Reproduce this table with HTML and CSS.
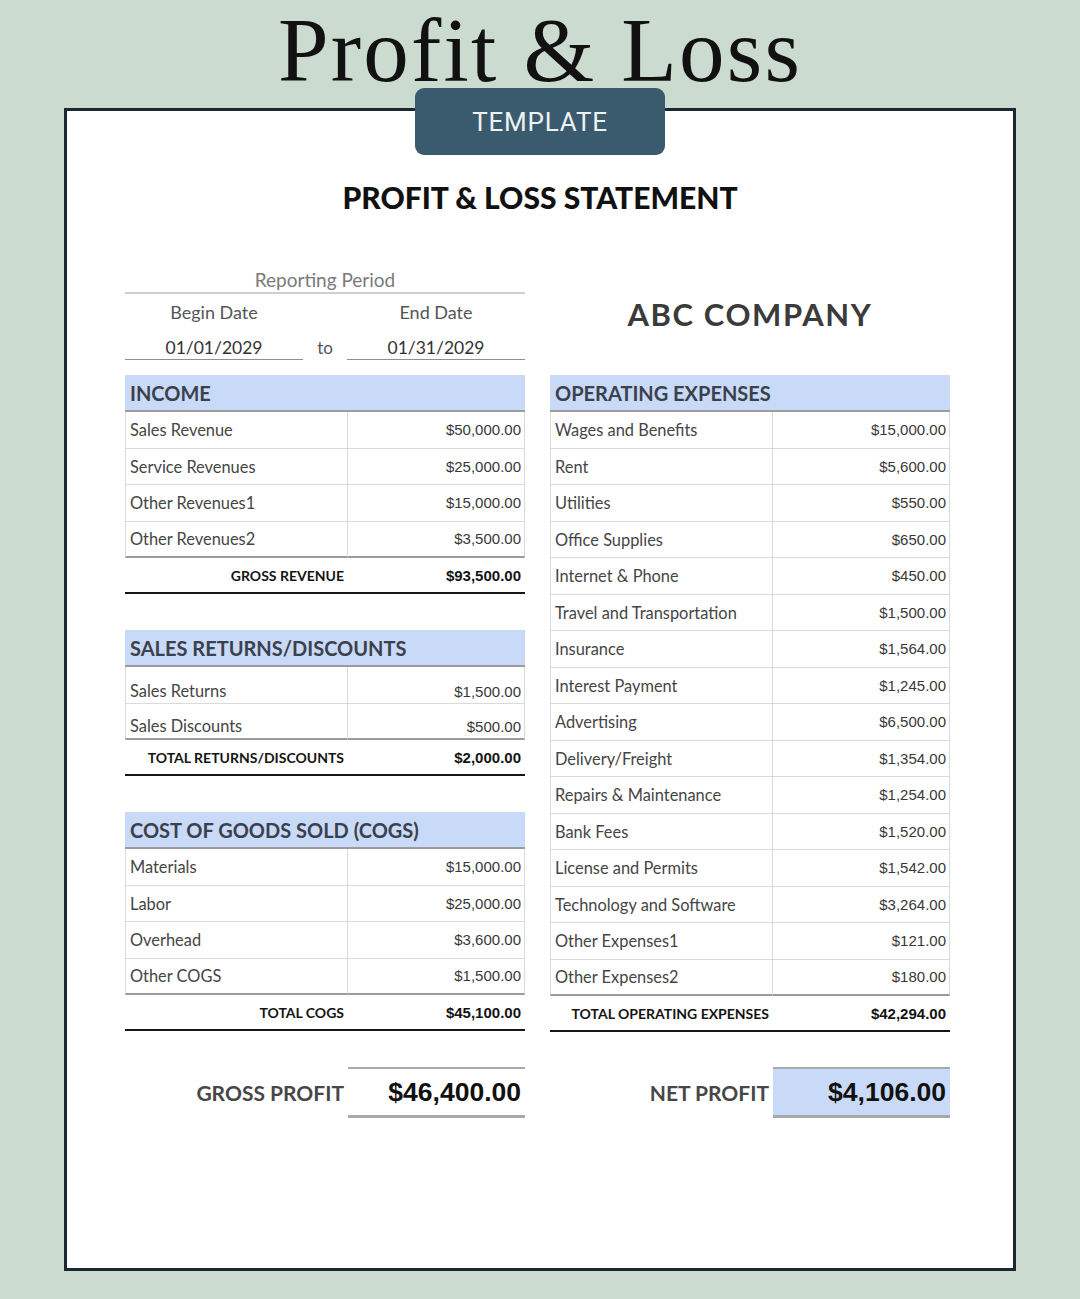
FILE: index.html
```html
<!DOCTYPE html>
<html lang="en">
<head>
<meta charset="utf-8">
<title>Profit &amp; Loss Template</title>
<link rel="stylesheet" href="styles.css">
</head>
<body>
<h1 class="title">Profit &amp; Loss</h1>
<main class="card">
  <div class="badge">TEMPLATE</div>
  <h2 class="statement">PROFIT &amp; LOSS STATEMENT</h2>
  <div class="sheet">
    <div class="period">
      <div class="period-title">Reporting Period</div>
      <div class="period-grid">
        <div class="period-label">Begin Date</div>
        <div></div>
        <div class="period-label">End Date</div>
        <div class="period-date">01/01/2029</div>
        <div class="period-to">to</div>
        <div class="period-date">01/31/2029</div>
      </div>
    </div>
    <div class="company">ABC COMPANY</div>

    <div class="stack">
      <section class="block">
        <div class="block-head">INCOME</div>
        <div class="rows">
          <div class="row"><div class="cell label">Sales Revenue</div><div class="cell value">$50,000.00</div></div>
          <div class="row"><div class="cell label">Service Revenues</div><div class="cell value">$25,000.00</div></div>
          <div class="row"><div class="cell label">Other Revenues1</div><div class="cell value">$15,000.00</div></div>
          <div class="row"><div class="cell label">Other Revenues2</div><div class="cell value">$3,500.00</div></div>
        </div>
        <div class="total"><div class="total-label">GROSS REVENUE</div><div class="total-value">$93,500.00</div></div>
      </section>

      <section class="block">
        <div class="block-head">SALES RETURNS/DISCOUNTS</div>
        <div class="rows low">
          <div class="row"><div class="cell label">Sales Returns</div><div class="cell value">$1,500.00</div></div>
          <div class="row"><div class="cell label">Sales Discounts</div><div class="cell value">$500.00</div></div>
        </div>
        <div class="total"><div class="total-label">TOTAL RETURNS/DISCOUNTS</div><div class="total-value">$2,000.00</div></div>
      </section>

      <section class="block">
        <div class="block-head">COST OF GOODS SOLD (COGS)</div>
        <div class="rows">
          <div class="row"><div class="cell label">Materials</div><div class="cell value">$15,000.00</div></div>
          <div class="row"><div class="cell label">Labor</div><div class="cell value">$25,000.00</div></div>
          <div class="row"><div class="cell label">Overhead</div><div class="cell value">$3,600.00</div></div>
          <div class="row"><div class="cell label">Other COGS</div><div class="cell value">$1,500.00</div></div>
        </div>
        <div class="total"><div class="total-label">TOTAL COGS</div><div class="total-value">$45,100.00</div></div>
      </section>
    </div>

    <div class="stack">
      <section class="block">
        <div class="block-head">OPERATING EXPENSES</div>
        <div class="rows">
          <div class="row"><div class="cell label">Wages and Benefits</div><div class="cell value">$15,000.00</div></div>
          <div class="row"><div class="cell label">Rent</div><div class="cell value">$5,600.00</div></div>
          <div class="row"><div class="cell label">Utilities</div><div class="cell value">$550.00</div></div>
          <div class="row"><div class="cell label">Office Supplies</div><div class="cell value">$650.00</div></div>
          <div class="row"><div class="cell label">Internet &amp; Phone</div><div class="cell value">$450.00</div></div>
          <div class="row"><div class="cell label">Travel and Transportation</div><div class="cell value">$1,500.00</div></div>
          <div class="row"><div class="cell label">Insurance</div><div class="cell value">$1,564.00</div></div>
          <div class="row"><div class="cell label">Interest Payment</div><div class="cell value">$1,245.00</div></div>
          <div class="row"><div class="cell label">Advertising</div><div class="cell value">$6,500.00</div></div>
          <div class="row"><div class="cell label">Delivery/Freight</div><div class="cell value">$1,354.00</div></div>
          <div class="row"><div class="cell label">Repairs &amp; Maintenance</div><div class="cell value">$1,254.00</div></div>
          <div class="row"><div class="cell label">Bank Fees</div><div class="cell value">$1,520.00</div></div>
          <div class="row"><div class="cell label">License and Permits</div><div class="cell value">$1,542.00</div></div>
          <div class="row"><div class="cell label">Technology and Software</div><div class="cell value">$3,264.00</div></div>
          <div class="row"><div class="cell label">Other Expenses1</div><div class="cell value">$121.00</div></div>
          <div class="row"><div class="cell label">Other Expenses2</div><div class="cell value">$180.00</div></div>
        </div>
        <div class="total"><div class="total-label">TOTAL OPERATING EXPENSES</div><div class="total-value">$42,294.00</div></div>
      </section>
    </div>

    <div class="profit">
      <div class="profit-label">GROSS PROFIT</div>
      <div class="profit-value">$46,400.00</div>
    </div>
    <div class="profit net">
      <div class="profit-label">NET PROFIT</div>
      <div class="profit-value">$4,106.00</div>
    </div>
  </div>
</main>
</body>
</html>
```

FILE: styles.css
```css
* {
  box-sizing: border-box;
}

html, body {
  margin: 0;
  padding: 0;
}

body {
  width: 1080px;
  height: 1299px;
  background: #cbdbd0;
  font-family: "Lato", "DejaVu Sans", sans-serif;
  color: #333;
  overflow: hidden;
}

.title {
  margin: 0;
  height: 101px;
  font-family: "Liberation Serif", "DejaVu Serif", serif;
  font-weight: 400;
  font-size: 91px;
  line-height: 101px;
  text-align: center;
  color: #111;
  letter-spacing: 2.2px;
}

.card {
  position: relative;
  margin: 7px 0 0 64px;
  width: 952px;
  height: 1163px;
  background: #fff;
  border: 3px solid #1c2731;
  padding-top: 68px;
}

.badge {
  position: absolute;
  top: -23px;
  left: 348px;
  width: 250px;
  height: 67px;
  border-radius: 9px;
  background: #3a5b6e;
  color: #eef2f4;
  font-family: "Roboto", "Liberation Sans", sans-serif;
  font-size: 26px;
  letter-spacing: 0.8px;
  display: flex;
  align-items: center;
  justify-content: center;
}

.statement {
  margin: 0;
  height: 36px;
  font-size: 30px;
  line-height: 36px;
  font-weight: 900;
  text-align: center;
  color: #111;
}

.sheet {
  margin: 53px 0 0 58px;
  display: grid;
  grid-template-columns: 400px 400px;
  column-gap: 25px;
}

/* reporting period */
.period-title {
  height: 26px;
  line-height: 24px;
  text-align: center;
  font-size: 19px;
  color: #7a7a7a;
  border-bottom: 2px solid #cfcfcf;
}

.period-grid {
  display: grid;
  grid-template-columns: 178px 44px 178px;
  grid-template-rows: 36px 30px;
}

.period-label {
  text-align: center;
  font-size: 18px;
  line-height: 36px;
  color: #555;
}

.period-date,
.period-to {
  padding-top: 7px;
  line-height: 22px;
  text-align: center;
  font-size: 17.5px;
  color: #333;
}

.period-date {
  border-bottom: 1.5px solid #8f8f8f;
}

.period-to {
  font-size: 17px;
  color: #555;
}

.company {
  align-self: center;
  text-align: center;
  font-size: 31px;
  line-height: 36px;
  font-weight: 700;
  letter-spacing: 1.6px;
  color: #3b3b3b;
}

/* tables */
.stack {
  margin-top: 15px;
  display: flex;
  flex-direction: column;
  gap: 36px;
}

.block-head {
  height: 37px;
  padding-left: 5px;
  background: #c9daf8;
  border-bottom: 2px solid #9b9b9b;
  display: flex;
  align-items: center;
  font-size: 20px;
  font-weight: 700;
  color: #3a414c;
}

.row {
  display: grid;
  grid-template-columns: 223px 177px;
  height: 36.5px;
}

.cell {
  display: flex;
  align-items: center;
  border-bottom: 1px solid #dadada;
  border-right: 1px solid #dadada;
}

.label {
  border-left: 1px solid #dadada;
  padding-left: 4px;
  font-size: 16.4px;
  color: #454545;
  white-space: nowrap;
}

.value {
  justify-content: flex-end;
  padding-right: 3px;
  font-family: "Liberation Sans", "Arial", sans-serif;
  font-size: 15px;
  color: #383838;
}

.rows.low .cell {
  align-items: flex-end;
  padding-bottom: 3px;
}

.rows .row:last-child .cell {
  border-bottom: 2px solid #9b9b9b;
}

.total {
  display: grid;
  grid-template-columns: 223px 177px;
  height: 36px;
  border-bottom: 2px solid #161616;
  align-items: center;
}

.total-label {
  text-align: right;
  padding-right: 4px;
  font-size: 14px;
  font-weight: 700;
  color: #141414;
}

.total-value {
  text-align: right;
  padding-right: 4px;
  font-family: "Liberation Sans", "Arial", sans-serif;
  font-size: 15px;
  font-weight: 700;
  color: #141414;
}

/* profit boxes */
.profit {
  margin-top: 35px;
  display: grid;
  grid-template-columns: 223px 177px;
  height: 51px;
}

.profit-label {
  display: flex;
  align-items: center;
  justify-content: flex-end;
  padding-right: 4px;
  font-size: 21px;
  font-weight: 700;
  color: #474747;
}

.profit-value {
  display: flex;
  align-items: center;
  justify-content: flex-end;
  padding-right: 4px;
  border-top: 2px solid #a9a9a9;
  border-bottom: 3px solid #a9a9a9;
  font-family: "Liberation Sans", "Arial", sans-serif;
  font-size: 26.5px;
  font-weight: 700;
  color: #111;
}

.net .profit-value {
  background: #c9daf8;
}
```
